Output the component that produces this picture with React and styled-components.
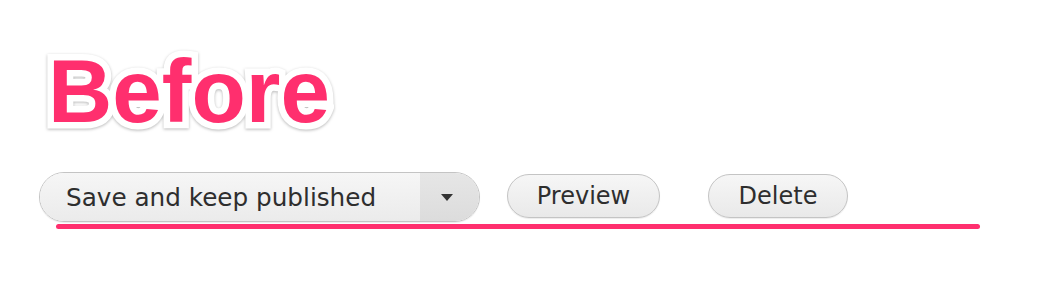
import React from "react";
import styled, { createGlobalStyle } from "styled-components";

const Global = createGlobalStyle`
  html, body { margin: 0; padding: 0; background: #ffffff; }
  body { font-family: "DejaVu Sans", Verdana, sans-serif; }
`;

const Page = styled.div`
  width: 1062px;
  height: 298px;
  box-sizing: border-box;
  padding: 47px 0 0 39px;
  background: #fff;
`;

const Title = styled.h1`
  margin: 0 0 36px 9px;
  font-family: "Liberation Sans", Arial, sans-serif;
  font-weight: 700;
  font-size: 89px;
  line-height: 89px;
  color: #ff2f6e;
  -webkit-text-stroke: 13px #ffffff;
  paint-order: stroke fill;
  filter: drop-shadow(0 1px 1.5px rgba(0, 0, 0, 0.28));
`;

const Row = styled.div`
  display: flex;
  align-items: center;
  height: 50px;
`;

const Split = styled.div`
  display: flex;
  width: 441px;
  height: 50px;
  box-sizing: border-box;
  border: 1px solid #c4c4c4;
  border-radius: 25px;
  overflow: hidden;
  box-shadow: 0 1px 1px rgba(0, 0, 0, 0.08);
  margin-right: 27px;
`;

const SplitMain = styled.div`
  flex: 1;
  display: flex;
  align-items: center;
  padding-left: 26px;
  background: linear-gradient(#f6f6f6, #ebebeb);
  font-size: 24.7px;
  color: #2e2e2e;
`;

const SplitToggle = styled.div`
  width: 59px;
  display: flex;
  align-items: center;
  justify-content: center;
  padding-right: 6px;
  box-sizing: border-box;
  background: linear-gradient(#e6e6e6, #dcdcdc);
`;

const Arrow = styled.span`
  width: 0;
  height: 0;
  border-left: 6px solid transparent;
  border-right: 6px solid transparent;
  border-top: 7px solid #333;
`;

const Button = styled.div`
  width: ${(p) => p.w}px;
  height: 44px;
  box-sizing: border-box;
  margin-right: ${(p) => p.mr || 0}px;
  display: flex;
  align-items: center;
  justify-content: center;
  border: 1px solid #c4c4c4;
  border-radius: 22px;
  background: linear-gradient(#f6f6f6, #e9e9e9);
  box-shadow: 0 1px 1px rgba(0, 0, 0, 0.08);
  font-size: 24px;
  color: #2e2e2e;
  position: relative;
  top: -1px;
`;

const Underline = styled.div`
  margin: 2px 0 0 17px;
  width: 924px;
  height: 5px;
  border-radius: 3px;
  background: #ff2f6e;
`;

export default function App() {
  return (
    <>
      <Global />
      <Page>
        <Title>Before</Title>
        <Row>
          <Split>
            <SplitMain>Save and keep published</SplitMain>
            <SplitToggle>
              <Arrow />
            </SplitToggle>
          </Split>
          <Button w={153} mr={48}>Preview</Button>
          <Button w={140}>Delete</Button>
        </Row>
        <Underline />
      </Page>
    </>
  );
}
